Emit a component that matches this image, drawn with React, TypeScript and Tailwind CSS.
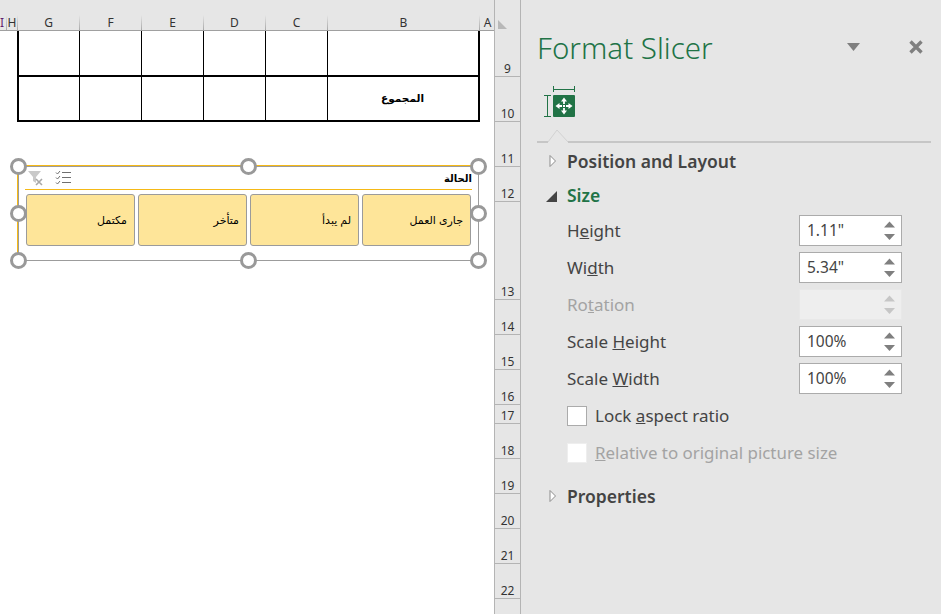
import React from "react";

const columns: [string, number][] = [
  ["I", 7], ["H", 11], ["G", 62], ["F", 62], ["E", 62], ["D", 62], ["C", 62], ["B", 152], ["A", 15],
];
const rows: [string, number][] = [
  ["9", 46], ["10", 45], ["11", 45], ["12", 35], ["13", 98], ["14", 35], ["15", 35], ["16", 35],
  ["17", 19], ["18", 35], ["19", 35], ["20", 35], ["21", 35], ["22", 35],
];

const handles: [number, number][] = [
  [-8, -8], [222, -8], [452, -8], [-8, 39], [452, 39], [-8, 86], [222, 86], [452, 86],
];

function SliceButton({ label }: { label: string }) {
  return (
    <div dir="rtl" className="flex h-[52px] w-[109px] items-center rounded-[3px] border border-[#9b9b9b] bg-[#fee599] pr-[7px] font-['Liberation_Sans','DejaVu_Sans',sans-serif] text-[11px] text-black">
      {label}
    </div>
  );
}

function Spin({ disabled }: { disabled?: boolean }) {
  const fill = disabled ? "#c6c6c6" : "#7f7f7f";
  return (
    <svg width="13" height="20" viewBox="0 0 13 20" className="shrink-0">
      <path d="M1 6.5 L6.5 0.5 L12 6.5 Z" fill={fill} />
      <path d="M1 13 L12 13 L6.5 19 Z" fill={fill} />
    </svg>
  );
}

function NumRow({ label, value, disabled }: { label: React.ReactNode; value?: string; disabled?: boolean }) {
  return (
    <div className={`flex h-[37px] items-center pl-[46px] pr-[39px] ${disabled ? "text-[#a3a3a3]" : "text-[#444444]"}`}>
      <div className="flex-1">{label}</div>
      <div className={`flex h-[31px] w-[103px] items-center justify-between border pl-[7px] pr-[5px] ${disabled ? "border-[#e8e8e8] bg-[#eeeeee]" : "border-[#ababab] bg-white"}`}>
        <span className="text-[15.5px] text-[#444444]">{value}</span>
        <Spin disabled={disabled} />
      </div>
    </div>
  );
}

function SizeIcon() {
  return (
    <svg width="32" height="32" viewBox="544 86 32 32" className="block">
      <g stroke="#217346" strokeWidth="1" fill="none">
        <path d="M553.5 89.5H574.5M553.5 86V92M574.5 86V92" />
        <path d="M547.5 95.5V116.5M544 95.5H551M544 116.5H551" />
      </g>
      <rect x="553" y="95" width="22" height="22" rx="1" fill="#217346" />
      <g stroke="#ffffff" strokeWidth="1.8" fill="none">
        <path d="M564 100V104M564 108V112M558 106H562M566 106H570" />
      </g>
      <g fill="#ffffff">
        <path d="M564 97.5L567 101.5H561Z" />
        <path d="M564 114.5L567 110.5H561Z" />
        <path d="M555.5 106L559.5 103V109Z" />
        <path d="M572.5 106L568.5 103V109Z" />
        <rect x="563" y="105" width="2" height="2" />
      </g>
    </svg>
  );
}

export default function App() {
  return (
    <div className="flex h-[614px] w-[941px] overflow-hidden bg-[#e6e6e6] font-['Noto_Sans',sans-serif]">
      {/* sheet */}
      <div className="flex w-[494px] shrink-0 flex-col">
        <div className="h-[15px] shrink-0" />
        <div className="flex h-[16px] shrink-0 border-b border-[#a0a0a0]">
          {columns.map(([c, w]) => (
            <div key={c} style={{ width: w }} className="flex shrink-0 overflow-hidden">
              <div className={`flex flex-1 items-center overflow-hidden text-[12px] leading-none ${c === "I" ? "justify-start text-[#5f1f6f]" : "justify-center text-[#333333]"}`}>
                {c}
              </div>
              {c !== "A" && <div className="w-px shrink-0 bg-linear-to-b from-[#e6e6e6] to-[#a8a8a8]" />}
            </div>
          ))}
        </div>
        <div className="relative flex-1 bg-white">
          <div className="ml-[17px] grid w-[463px] grid-cols-[61px_62px_62px_62px_62px_150px] grid-rows-[46px_43px] border-x-2 border-b-2 border-black">
            {Array.from({ length: 6 }).map((_, i) => (
              <div key={i} className={`border-b-2 border-black ${i < 5 ? "border-r" : ""}`} />
            ))}
            {Array.from({ length: 5 }).map((_, i) => (
              <div key={i} className="border-r border-black" />
            ))}
            <div
              dir="rtl"
              className="flex items-center pr-[54px] font-['Liberation_Sans','DejaVu_Sans',sans-serif] text-[10.5px] font-bold text-black"
            >
              المجموع
            </div>
          </div>

          {/* slicer */}
          <div className="absolute left-[17px] top-[134px] h-[96px] w-[462px] border-l border-t border-[#f5b916]">
            <div className="relative h-full border border-[#9c9c9c] bg-white px-[6px]">
              <div className="flex h-[23px] items-center justify-between border-b border-[#f5b916] pl-[2px]">
                <div className="flex items-center gap-[11px]">
                  <svg width="17" height="16" viewBox="0 0 17 16">
                    <path d="M1 1H14L9 7V13L6 11V7Z" fill="#c9c9c9" />
                    <path d="M9 9L15 15M15 9L9 15" stroke="#a8a8a8" strokeWidth="1.6" />
                  </svg>
                  <svg width="17" height="16" viewBox="0 0 17 16" fill="none" stroke="#6f6f6f" strokeWidth="1">
                    <path d="M7 2.5H16M7 7.5H16M7 12.5H16" />
                    <path d="M1 2.5L2.5 4L5 1M1 7.5L2.5 9L5 6M1 12.5L2.5 14L5 11" />
                  </svg>
                </div>
                <span
                  dir="rtl"
                  className="font-['Liberation_Sans','DejaVu_Sans',sans-serif] text-[10px] font-bold text-black"
                >
                  الحالة
                </span>
              </div>
              <div dir="ltr" className="mt-[4px] flex gap-[3px] pl-[1px]">
                <SliceButton label="مكتمل" />
                <SliceButton label="متأخر" />
                <SliceButton label="لم يبدأ" />
                <SliceButton label="جارى العمل" />
              </div>
              {handles.map(([x, y]) => (
                <div
                  key={`${x}-${y}`}
                  style={{ left: x - 1, top: y - 1 }}
                  className="absolute h-[17px] w-[17px] rounded-full border-[3px] border-[#999999] bg-white"
                />
              ))}
            </div>
          </div>
        </div>
      </div>

      {/* row header */}
      <div className="flex w-[27px] shrink-0 flex-col border-x border-[#b4b4b4]">
        <div className="h-[31px] shrink-0 pl-[3px] pt-[20px]">
          <svg width="10" height="9" viewBox="0 0 10 9" className="block">
            <path d="M0 0L9 9H0Z" fill="#b8b8b8" />
          </svg>
        </div>
        {rows.map(([r, h]) => (
          <div
            key={r}
            style={{ height: h }}
            className="flex shrink-0 items-end justify-center border-b border-[#b4b4b4] text-[12px] leading-[15px] text-[#333333]"
          >
            {r}
          </div>
        ))}
      </div>

      {/* panel */}
      <div className="flex-1 text-[17px] text-[#444444]">
        <div className="flex h-[68px] items-end justify-between pl-[16px] pr-[17px]">
          <span className="text-[29.5px] font-light leading-[40px] text-[#217346]">Format Slicer</span>
          <div className="mb-[13px] flex items-center gap-[48px]">
            <svg width="13" height="8" viewBox="0 0 13 8"><path d="M0 0H13L6.5 8Z" fill="#7f7f7f" /></svg>
            <svg width="16" height="16" viewBox="0 0 16 16">
              <path d="M2.5 2.5L13.5 13.5M13.5 2.5L2.5 13.5" stroke="#7f7f7f" strokeWidth="3.4" />
            </svg>
          </div>
        </div>
        <div className="ml-[23px] mt-[18px] h-[32px] w-[32px]">
          <SizeIcon />
        </div>
        <svg width="420" height="25" viewBox="0 0 420 25" className="block">
          <path d="M16 24H27M47 24H410" fill="none" stroke="#c6c6c6" strokeWidth="2" />
          <path d="M27 24L36 12L47 24" fill="none" stroke="#d2d2d2" strokeWidth="1" />
        </svg>
        <div className="flex h-[36px] items-center text-[17.5px] font-semibold">
          <svg width="46" height="12" viewBox="0 0 46 12" className="shrink-0">
            <path d="M29 .5L34.5 6L29 11.5Z" fill="#ffffff" stroke="#8c8c8c" />
          </svg>
          Position and Layout
        </div>
        <div className="flex h-[33px] items-center text-[17.5px] font-semibold text-[#217346]">
          <svg width="46" height="12" viewBox="0 0 46 12" className="shrink-0">
            <path d="M25 12L36 1V12Z" fill="#444444" />
          </svg>
          Size
        </div>
        <NumRow label={<>H<u>e</u>ight</>} value={'1.11"'} />
        <NumRow label={<>Wi<u>d</u>th</>} value={'5.34"'} />
        <NumRow label={<>Ro<u>t</u>ation</>} disabled />
        <NumRow label={<>Scale <u>H</u>eight</>} value="100%" />
        <NumRow label={<>Scale <u>W</u>idth</>} value="100%" />
        <div className="flex h-[37px] items-center pl-[46px]">
          <div className="mr-[8px] h-[20px] w-[20px] border border-[#ababab] bg-white" />
          <span>Lock <u>a</u>spect ratio</span>
        </div>
        <div className="flex h-[37px] items-center pl-[46px] text-[#a3a3a3]">
          <div className="mr-[8px] h-[20px] w-[20px] border border-[#eeeeee] bg-white" />
          <span className="text-[16.9px]"><u>R</u>elative to original picture size</span>
        </div>
        <div className="mt-[6px] flex h-[38px] items-center text-[17.5px] font-semibold">
          <svg width="46" height="12" viewBox="0 0 46 12" className="shrink-0">
            <path d="M29 .5L34.5 6L29 11.5Z" fill="#ffffff" stroke="#8c8c8c" />
          </svg>
          Properties
        </div>
      </div>
    </div>
  );
}
